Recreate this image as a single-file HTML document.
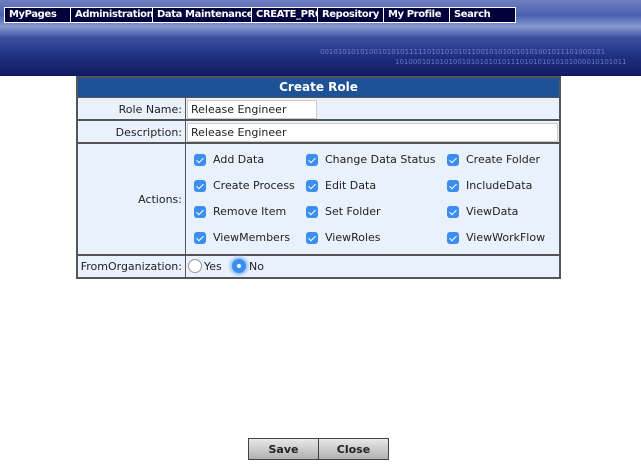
<!DOCTYPE html>
<html><head><style>
*{box-sizing:border-box;margin:0;padding:0}
body{width:641px;height:473px;background:#fff;font-family:"DejaVu Sans",Verdana,sans-serif;font-size:11px;color:#222;position:relative;overflow:hidden}
.hdr{position:absolute;left:0;top:0;width:641px;height:76px;background:linear-gradient(180deg,#6e7fc0 0%,#4a5fb0 20%,#8a9ad0 35%,#3a4fa0 50%,#1f2e80 75%,#101c60 100%)}
.bin{position:absolute;color:#8a9ad8;font-size:7px;letter-spacing:0;opacity:.7;white-space:nowrap}
.nav{position:absolute;top:7px;height:16px;background:#00003a;border:1px solid #fff;color:#fff;font-weight:bold;font-size:10px;letter-spacing:-0.4px;line-height:14px;padding-left:4px;overflow:hidden;white-space:nowrap}
.abs{position:absolute}
.box{position:absolute;background:#e9f1fc;border:1px solid #555}
.lbl{position:absolute;text-align:right;font-size:11px}
.inp{position:absolute;background:#fff;border:1px solid #ccc;font-size:11px;line-height:17px;padding-left:3px}
.cb{position:absolute;width:12px;height:12px;background:#3b8ef0;border-radius:3px}
.cb:after{content:"";position:absolute;left:4px;top:1.5px;width:3px;height:6px;border:solid #fff;border-width:0 1.5px 1.5px 0;transform:rotate(45deg)}
.t{position:absolute;font-size:11px}
.btn{position:absolute;top:438px;height:22px;background:linear-gradient(#e8e8e8,#b0b0b0);border:1px solid #444;font-weight:bold;font-size:11px;text-align:center;line-height:21px}
</style></head><body>
<div class="hdr"></div>
<div class="bin" style="left:320px;top:48px">0010101010100101010111110101010101100101010010101001011101000101</div>
<div class="bin" style="left:395px;top:58px">1010001010101001010101010111010101010101000010101011</div>
<div class="nav" style="left:4px;width:67px">MyPages</div>
<div class="nav" style="left:70px;width:83px">Administration</div>
<div class="nav" style="left:152px;width:100px">Data Maintenance</div>
<div class="nav" style="left:251px;width:67px">CREATE_PROCESS</div>
<div class="nav" style="left:317px;width:67px">Repository</div>
<div class="nav" style="left:383px;width:67px">My Profile</div>
<div class="nav" style="left:449px;width:67px">Search</div>

<div class="abs" style="left:76px;top:76px;width:485px;height:203px;background:#555"></div>
<div class="abs" style="left:78px;top:78px;width:481px;height:19px;background:#1d5296;color:#fff;font-weight:bold;font-size:12px;text-align:center;line-height:19px">Create Role</div>

<div class="box" style="left:77px;top:97px;width:109px;height:23px"></div>
<div class="box" style="left:185px;top:97px;width:375px;height:23px"></div>
<div class="lbl" style="left:78px;top:103px;width:104px">Role Name:</div>
<div class="inp" style="left:187px;top:100px;width:130px;height:19px">Release Engineer</div>

<div class="box" style="left:77px;top:120px;width:109px;height:23px"></div>
<div class="box" style="left:185px;top:120px;width:375px;height:23px"></div>
<div class="lbl" style="left:78px;top:126px;width:104px">Description:</div>
<div class="inp" style="left:187px;top:123px;width:371px;height:19px">Release Engineer</div>

<div class="box" style="left:77px;top:143px;width:109px;height:112px"></div>
<div class="box" style="left:185px;top:143px;width:375px;height:112px"></div>
<div class="lbl" style="left:78px;top:193px;width:104px">Actions:</div>

<div class="cb" style="left:194px;top:154px"></div><div class="t" style="left:213px;top:153px">Add Data</div>
<div class="cb" style="left:306px;top:154px"></div><div class="t" style="left:325px;top:153px">Change Data Status</div>
<div class="cb" style="left:447px;top:154px"></div><div class="t" style="left:466px;top:153px">Create Folder</div>
<div class="cb" style="left:194px;top:180px"></div><div class="t" style="left:213px;top:179px">Create Process</div>
<div class="cb" style="left:306px;top:180px"></div><div class="t" style="left:325px;top:179px">Edit Data</div>
<div class="cb" style="left:447px;top:180px"></div><div class="t" style="left:466px;top:179px">IncludeData</div>
<div class="cb" style="left:194px;top:206px"></div><div class="t" style="left:213px;top:205px">Remove Item</div>
<div class="cb" style="left:306px;top:206px"></div><div class="t" style="left:325px;top:205px">Set Folder</div>
<div class="cb" style="left:447px;top:206px"></div><div class="t" style="left:466px;top:205px">ViewData</div>
<div class="cb" style="left:194px;top:232px"></div><div class="t" style="left:213px;top:231px">ViewMembers</div>
<div class="cb" style="left:306px;top:232px"></div><div class="t" style="left:325px;top:231px">ViewRoles</div>
<div class="cb" style="left:447px;top:232px"></div><div class="t" style="left:466px;top:231px">ViewWorkFlow</div>

<div class="box" style="left:77px;top:255px;width:109px;height:23px"></div>
<div class="box" style="left:185px;top:255px;width:375px;height:23px"></div>
<div class="lbl" style="left:78px;top:260px;width:104px">FromOrganization:</div>
<div class="abs" style="left:188px;top:259px;width:14px;height:14px;border-radius:50%;background:#fff;border:1px solid #999"></div>
<div class="t" style="left:204px;top:260px">Yes</div>
<div class="abs" style="left:232px;top:259px;width:14px;height:14px;border-radius:50%;background:#3b8ef0;box-shadow:0 0 3px 2px #8bbcf5"></div>
<div class="abs" style="left:237px;top:264px;width:4px;height:4px;border-radius:50%;background:#fff"></div>
<div class="t" style="left:249px;top:260px">No</div>

<div class="btn" style="left:248px;width:71px">Save</div>
<div class="btn" style="left:318px;width:71px">Close</div>
</body></html>
